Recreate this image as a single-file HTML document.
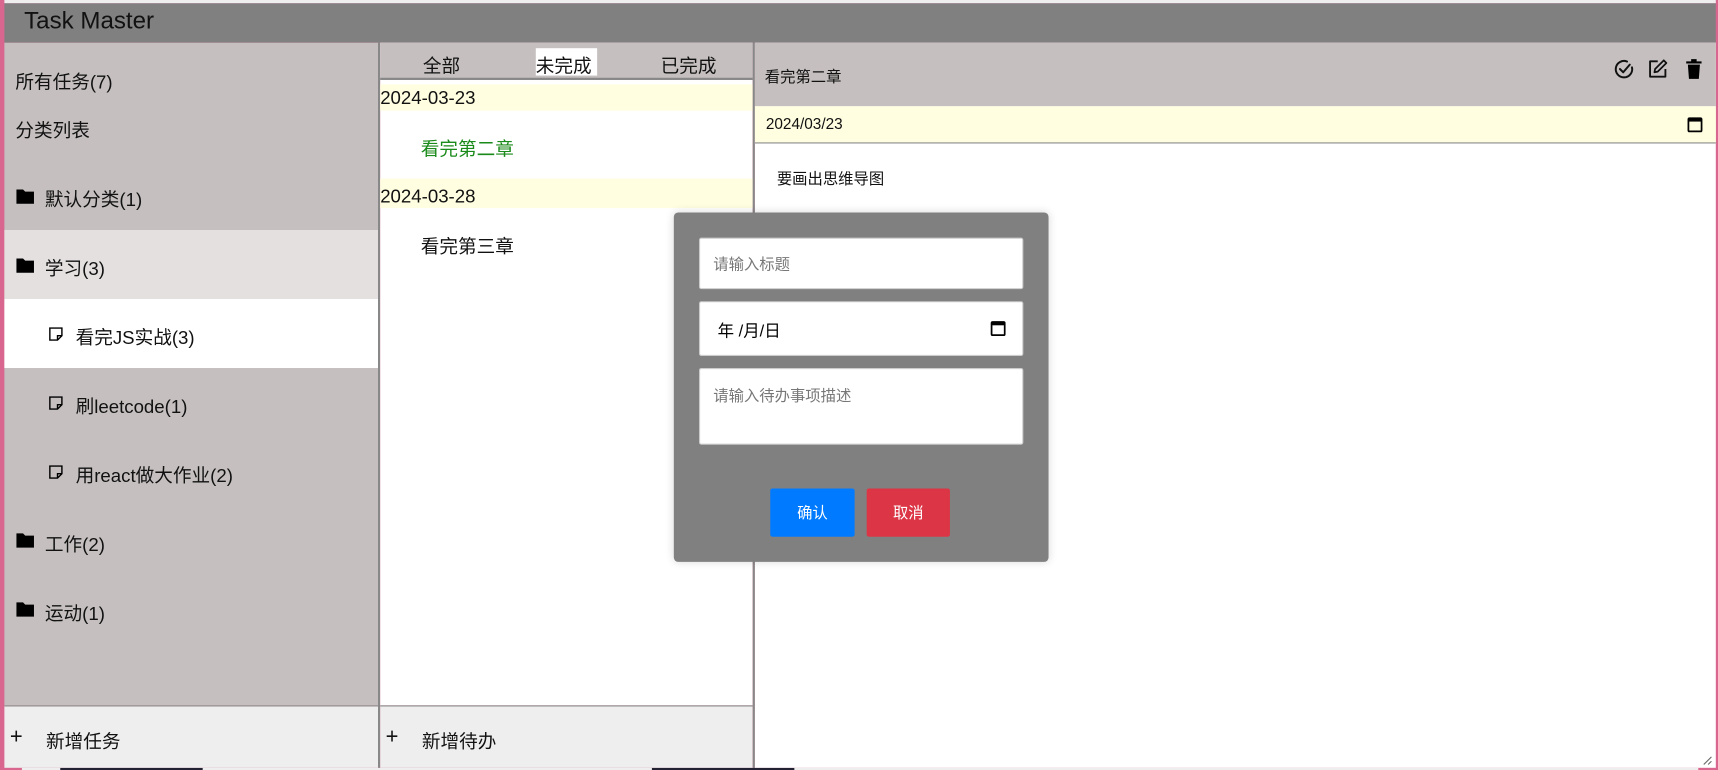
<!DOCTYPE html>
<html><head><meta charset="utf-8">
<style>
*{box-sizing:border-box;margin:0;padding:0}
html,body{width:1718px;height:770px;overflow:hidden;background:#d9668f}
body{font-family:"Liberation Sans","Noto Sans CJK SC",sans-serif;color:#111}
#w{position:absolute;left:0;top:0;width:1568px;height:703px;transform:scale(1.09566,1.0953);transform-origin:0 0;background:#d9668f}
.a{position:absolute}
.t{position:absolute;white-space:nowrap}
.l{font-size:17px}
</style></head><body>
<div id="w">
  <div class="a" style="left:4px;top:0;width:1562px;height:3px;background:#eee"></div>
  <div class="a" style="left:4px;top:3px;width:1562px;height:36px;background:#808080"></div>
  <div class="t" style="left:22px;top:6px;font-size:22px;color:#111">Task Master</div>
  <div class="a" style="left:20px;top:701px;width:1530px;height:2px;background:#eee"></div>
  <div class="a" style="left:55px;top:701px;width:130px;height:2px;background:#223"></div>
  <div class="a" style="left:595px;top:701px;width:130px;height:2px;background:#223"></div>

  <!-- left -->
  <div class="a" style="left:4px;top:39px;width:342px;height:605px;background:#c5bfbf"></div>
  <div class="t l" style="left:14px;top:61px">所有任务(7)</div>
  <div class="t l" style="left:14px;top:105px">分类列表</div>
  <div class="a" style="left:4px;top:210px;width:342px;height:63px;background:#e4e0e0"></div>
  <div class="a" style="left:4px;top:273px;width:342px;height:63px;background:#fff"></div>
  <svg class="a" style="left:14px;top:171px" width="18" height="16" viewBox="0 0 18 16"><path d="M1 2h6l2 2h8v11H1z" fill="#000"/></svg>
  <div class="t l" style="left:41px;top:168px">默认分类(1)</div>
  <svg class="a" style="left:14px;top:234px" width="18" height="16" viewBox="0 0 18 16"><path d="M1 2h6l2 2h8v11H1z" fill="#000"/></svg>
  <div class="t l" style="left:41px;top:231px">学习(3)</div>
  <svg class="a" style="left:44px;top:298px" width="14" height="14" viewBox="0 0 14 14"><path d="M1.5 1.5h11v7l-4 4h-7z M8.5 12.5v-4h4" fill="none" stroke="#000" stroke-width="1.3"/></svg>
  <div class="t l" style="left:69px;top:294px">看完JS实战(3)</div>
  <svg class="a" style="left:44px;top:361px" width="14" height="14" viewBox="0 0 14 14"><path d="M1.5 1.5h11v7l-4 4h-7z M8.5 12.5v-4h4" fill="none" stroke="#000" stroke-width="1.3"/></svg>
  <div class="t l" style="left:69px;top:357px">刷leetcode(1)</div>
  <svg class="a" style="left:44px;top:424px" width="14" height="14" viewBox="0 0 14 14"><path d="M1.5 1.5h11v7l-4 4h-7z M8.5 12.5v-4h4" fill="none" stroke="#000" stroke-width="1.3"/></svg>
  <div class="t l" style="left:69px;top:420px">用react做大作业(2)</div>
  <svg class="a" style="left:14px;top:485px" width="18" height="16" viewBox="0 0 18 16"><path d="M1 2h6l2 2h8v11H1z" fill="#000"/></svg>
  <div class="t l" style="left:41px;top:483px">工作(2)</div>
  <svg class="a" style="left:14px;top:548px" width="18" height="16" viewBox="0 0 18 16"><path d="M1 2h6l2 2h8v11H1z" fill="#000"/></svg>
  <div class="t l" style="left:41px;top:546px">运动(1)</div>
  <div class="a" style="left:4px;top:644px;width:342px;height:57px;background:#eee;border-top:1px solid #888"></div>
  <div class="t" style="left:9px;top:662px;font-size:20px">+</div>
  <div class="t l" style="left:42px;top:663px">新增任务</div>

  <!-- middle -->
  <div class="a" style="left:345px;top:39px;width:2px;height:662px;background:#888"></div>
  <div class="a" style="left:347px;top:39px;width:340px;height:605px;background:#fff"></div>
  <div class="a" style="left:347px;top:39px;width:340px;height:34px;background:#c5bfbf;border-bottom:2px solid #888"></div>
  <div class="t l" style="left:386px;top:46px">全部</div>
  <div class="a" style="left:489px;top:44px;width:56px;height:25px;background:#fff"></div>
  <div class="t l" style="left:489px;top:46px">未完成</div>
  <div class="t l" style="left:603px;top:46px">已完成</div>
  <div class="a" style="left:347px;top:77px;width:340px;height:24px;background:#fffee0"></div>
  <div class="t l" style="left:347px;top:80px">2024-03-23</div>
  <div class="t l" style="left:384px;top:122px;color:#1a8a1a">看完第二章</div>
  <div class="a" style="left:347px;top:163px;width:340px;height:27px;background:#fffee0"></div>
  <div class="t l" style="left:347px;top:170px">2024-03-28</div>
  <div class="t l" style="left:384px;top:211px">看完第三章</div>
  <div class="a" style="left:347px;top:644px;width:340px;height:57px;background:#eee;border-top:1px solid #888"></div>
  <div class="t" style="left:352px;top:662px;font-size:20px">+</div>
  <div class="t l" style="left:385px;top:663px">新增待办</div>

  <!-- right -->
  <div class="a" style="left:687px;top:39px;width:2px;height:662px;background:#888"></div>
  <div class="a" style="left:689px;top:39px;width:877px;height:662px;background:#fff"></div>
  <div class="a" style="left:689px;top:39px;width:877px;height:58px;background:#c5bfbf"></div>
  <div class="t" style="left:698px;top:60px;font-size:14px">看完第二章</div>
  <svg class="a" style="left:1472px;top:53px" width="20" height="20" viewBox="0 0 20 20"><path d="M17.5 8.5A7.5 7.5 0 1 1 13 3.2" fill="none" stroke="#111" stroke-width="1.8" stroke-linecap="round"/><path d="M6.5 10l3 3 6-7" fill="none" stroke="#111" stroke-width="1.8" stroke-linecap="round" stroke-linejoin="round"/></svg>
  <svg class="a" style="left:1503px;top:53px" width="20" height="20" viewBox="0 0 20 20"><path d="M10 3H3v14h14v-7" fill="none" stroke="#111" stroke-width="1.7" stroke-linejoin="round"/><path d="M7 13l.6-3L15.5 2.1l2.4 2.4L10 12.4z" fill="none" stroke="#111" stroke-width="1.6" stroke-linejoin="round"/></svg>
  <svg class="a" style="left:1538px;top:53px" width="16" height="20" viewBox="0 0 16 20"><path d="M1 3h14v2H1z M5.5 1h5v2h-5z M2.5 6h11l-1 13h-9z" fill="#000"/></svg>
  <div class="a" style="left:689px;top:97px;width:877px;height:34px;background:#fffee0;border-bottom:1px solid #888"></div>
  <div class="t" style="left:699px;top:105px;font-size:14px">2024/03/23</div>
  <svg class="a" style="left:1540px;top:106px" width="14" height="15" viewBox="0 0 14 15"><rect x="1" y="2" width="12" height="12" rx="1" fill="none" stroke="#000" stroke-width="1.6"/><rect x="1" y="2" width="12" height="3" fill="#000"/></svg>
  <div class="t" style="left:709px;top:153px;font-size:14px">要画出思维导图</div>
  <svg class="a" style="left:1553px;top:689px" width="10" height="10" viewBox="0 0 10 10"><path d="M9 2L2 9M9 6L6 9" stroke="#666" stroke-width="1"/></svg>

  <!-- modal -->
  <div class="a" style="left:615px;top:194px;width:342px;height:319px;background:#808080;border-radius:4px;box-shadow:0 0 8px rgba(0,0,0,.15)"></div>
  <div class="a" style="left:638px;top:217px;width:296px;height:47px;background:#fff;border:1px solid #ccc;border-radius:2px"></div>
  <div class="t" style="left:651px;top:231px;font-size:14px;color:#777">请输入标题</div>
  <div class="a" style="left:638px;top:275px;width:296px;height:50px;background:#fff;border:1px solid #ccc;border-radius:2px"></div>
  <div class="t" style="left:655px;top:291px;font-size:15px;color:#000">年 /月/日</div>
  <svg class="a" style="left:904px;top:292px" width="14" height="15" viewBox="0 0 14 15"><rect x="1" y="2" width="12" height="12" rx="1" fill="none" stroke="#000" stroke-width="1.6"/><rect x="1" y="2" width="12" height="3" fill="#000"/></svg>
  <div class="a" style="left:638px;top:336px;width:296px;height:70px;background:#fff;border:1px solid #ccc;border-radius:2px"></div>
  <div class="t" style="left:651px;top:351px;font-size:14px;color:#777">请输入待办事项描述</div>
  <div class="a" style="left:703px;top:446px;width:77px;height:44px;background:#007bff;border-radius:2px"></div>
  <div class="t" style="left:703px;top:458px;width:77px;text-align:center;font-size:14px;color:#fff">确认</div>
  <div class="a" style="left:791px;top:446px;width:76px;height:44px;background:#dc3545;border-radius:2px"></div>
  <div class="t" style="left:791px;top:458px;width:76px;text-align:center;font-size:14px;color:#fff">取消</div>
</div>
</body></html>
